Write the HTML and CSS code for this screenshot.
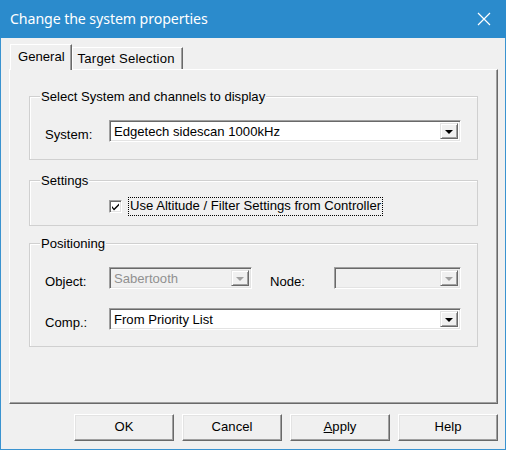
FILE: index.html
```html
<!DOCTYPE html>
<html>
<head>
<meta charset="utf-8">
<link rel="stylesheet" href="styles.css">
</head>
<body>
<div class="window">
  <div class="titlebar">
    <span class="title">Change the system properties</span>
    <svg class="close" width="14" height="14" viewBox="0 0 14 14"><path d="M1 1 L13 13 M13 1 L1 13" stroke="#fff" stroke-width="1.2" fill="none"/></svg>
  </div>
  <div class="client">
    <div class="tabs">
      <div class="tab selected">General</div>
      <div class="tab second">Target Selection</div>
    </div>
    <div class="panel">
      <div class="group g1">
        <span class="legend">Select System and channels to display</span>
        <div class="row r1">
          <span class="label">System:</span>
          <div class="combo wide"><span class="value">Edgetech sidescan 1000kHz</span><span class="btn"><i class="tri"></i></span></div>
        </div>
      </div>
      <div class="group g2">
        <span class="legend">Settings</span>
        <div class="row r2">
          <span class="check"><svg width="9" height="9" viewBox="0 0 9 9"><path d="M1 4 L3 6.5 L8 1.5 L8 3.5 L3 8.5 L1 6 Z" fill="#000"/></svg></span>
          <span class="checklabel">Use Altitude / Filter Settings from Controller</span>
        </div>
      </div>
      <div class="group g3">
        <span class="legend">Positioning</span>
        <div class="row r3">
          <span class="label">Object:</span>
          <div class="combo obj disabled"><span class="value">Sabertooth</span><span class="btn"><i class="tri"></i></span></div>
          <span class="label node">Node:</span>
          <div class="combo nodebox disabled"><span class="value"></span><span class="btn"><i class="tri"></i></span></div>
        </div>
        <div class="row r4">
          <span class="label">Comp.:</span>
          <div class="combo wide"><span class="value">From Priority List</span><span class="btn"><i class="tri"></i></span></div>
        </div>
      </div>
    </div>
    <div class="buttons">
      <div class="button">OK</div>
      <div class="button">Cancel</div>
      <div class="button"><u>A</u>pply</div>
      <div class="button">Help</div>
    </div>
  </div>
</div>
</body>
</html>
```
FILE: styles.css
```css
* { box-sizing: border-box; }
html, body { margin: 0; padding: 0; background: #f0f0f0; }
body { font-family: "Liberation Sans", Arial, sans-serif; font-size: 13.1px; color: #000; }

.window {
  width: 506px; height: 450px;
  background: #f0f0f0;
  border: 1px solid #3a93d0;
  border-top: none;
  display: flex; flex-direction: column;
}
.titlebar {
  height: 38px; margin: 0 -1px;
  background: #2b8bcc;
  display: flex; align-items: center; justify-content: space-between;
  padding: 0 15px 0 10px;
}
.title { color: #fff; font-family: "Noto Sans", "Open Sans", sans-serif; font-size: 14.2px; letter-spacing: -0.1px; padding-bottom: 2px; }
.close { margin-top: -1px; }

.client { padding: 0 7px 0 8px; }

.tabs { height: 31px; display: flex; align-items: flex-end; padding-left: 1px; }
.tab {
  height: 22px; padding: 0 4px 0 5px;
  border: 1px solid #fff; border-bottom: none;
  border-right: 1px solid #696969;
  box-shadow: inset -1px 0 0 #a0a0a0;
  line-height: 21px; white-space: nowrap;
}
.tab.second { padding: 0 7px 0 5px; letter-spacing: 0.2px; }
.tab.selected {
  height: 26px; margin-bottom: -1px; position: relative; z-index: 1;
  background: #f0f0f0; padding: 0 6px 0 7px; line-height: 24px;
}

.panel {
  height: 335px;
  border: 1px solid #fff;
  border-right-color: #696969; border-bottom-color: #696969;
  box-shadow: inset -1px -1px 0 #a0a0a0;
  padding: 26px 19px 0 19px;
}

.group {
  border: 1px solid #d0d0d0;
  box-shadow: inset 1px 1px 0 #fff;
  padding: 0 16px 0 15px;
}
.g1 { height: 64px; }
.g2 { height: 46px; margin-top: 20px; }
.g3 { height: 104px; margin-top: 17px; }
.legend {
  display: table; margin: -8px 0 0 -5px; padding: 0 1px;
  background: #f0f0f0; line-height: 15px;
}

.row { display: flex; align-items: flex-start; }
.r1 { margin-top: 16px; }
.r2 { margin-top: 9px; padding-left: 64px; align-items: center; }
.r3 { margin-top: 16px; }
.r4 { margin-top: 19px; }

.label { width: 64px; flex: none; padding-top: 7px; line-height: 15px; }
.label.node { margin-left: 18px; }

.combo {
  height: 22px; display: flex; align-items: stretch;
  border: 1px solid; border-color: #a0a0a0 #fff #fff #a0a0a0;
  box-shadow: inset 1px 1px 0 #696969, inset -1px -1px 0 #e3e3e3;
  background: #fff; padding: 2px 2px 2px 2px;
}
.combo.wide { flex: 1; }
.combo.obj { width: 143px; }
.combo.nodebox { flex: 1; }
.combo.disabled { background: #f0f0f0; color: #909090; }
.value { flex: 1; padding-left: 2px; line-height: 17px; white-space: nowrap; overflow: hidden; }
.btn {
  width: 18px; flex: none;
  background: #f0f0f0;
  border: 1px solid; border-color: #e3e3e3 #696969 #696969 #e3e3e3;
  box-shadow: inset 1px 1px 0 #fff, inset -1px -1px 0 #a0a0a0;
  display: flex; align-items: center; justify-content: center;
}
.tri {
  width: 0; height: 0; margin-top: 1px;
  border-left: 4px solid transparent; border-right: 4px solid transparent;
  border-top: 4px solid #000;
}
.disabled .tri { border-top-color: #a0a0a0; }

.check {
  width: 13px; height: 13px; flex: none;
  background: #fff;
  border: 1px solid; border-color: #a0a0a0 #fff #fff #a0a0a0;
  box-shadow: inset 1px 1px 0 #696969, inset -1px -1px 0 #e3e3e3;
  display: flex; align-items: center; justify-content: center;
}
.checklabel {
  margin-left: 6px; padding: 1px 1px 2px 1px;
  border: 1px dotted #000; line-height: 14px;
}

.buttons {
  display: flex; justify-content: flex-end; gap: 8px;
  margin-top: 10px; padding-right: 0;
}
.button {
  width: 100px; height: 27px;
  border: 1px solid; border-color: #fff #696969 #696969 #fff;
  box-shadow: inset -1px -1px 0 #a0a0a0, inset 1px 1px 0 #e3e3e3;
  text-align: center; line-height: 24px;
}
```
